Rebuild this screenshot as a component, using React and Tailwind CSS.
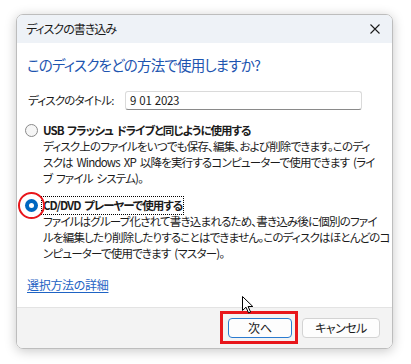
import React from "react";

const jp = "font-['Noto_Sans_CJK_JP',sans-serif] [font-feature-settings:'palt']";

function Radio({ checked }) {
  if (checked) {
    return (
      <span className="relative flex h-[13px] w-[13px] shrink-0 items-center justify-center rounded-full bg-[#0067c0]">
        <span className="h-[5px] w-[5px] rounded-full bg-white" />
        {/* red annotation circle */}
        <span className="absolute left-[-7px] top-[-7px] h-[27px] w-[27px] rounded-full border-2 border-[#e8161b]" />
      </span>
    );
  }
  return (
    <span className="h-[13px] w-[13px] shrink-0 rounded-full border border-[#8a8a8a] bg-[#f6f6f6]" />
  );
}

function Option({ checked, title, lines }) {
  return (
    <div>
      <div className="flex h-[16px] items-center gap-[5px]">
        <Radio checked={checked} />
        <span
          className={
            "text-[11.5px] font-bold leading-[15px] tracking-[-1px] [word-spacing:2px] whitespace-nowrap " +
            (checked ? "outline-1 outline-dotted outline-black outline-offset-[1px]" : "")
          }
        >
          {title}
        </span>
      </div>
      <div className="pl-[18px] text-[11.5px] leading-[16px] tracking-[-0.8px] [word-spacing:2px] whitespace-nowrap">
        {lines.map((l) => (
          <div key={l}>{l}</div>
        ))}
      </div>
    </div>
  );
}

export default function App() {
  return (
    <div className={"relative h-[364px] w-[411px] overflow-hidden bg-white pl-[16px] pt-[14px] text-[#1b1b1b] " + jp}>
      <div className="w-[377px] overflow-hidden rounded-[7px] border border-[#bdbdbd] shadow-[0_2px_12px_rgba(0,0,0,0.22)]">
        {/* title bar */}
        <div className="flex h-[28px] items-center justify-between bg-[#eef2f7] pl-[9px] pr-[11px]">
          <span className="text-[12px] tracking-[-1px]">ディスクの書き込み</span>
          <svg width="12" height="12" viewBox="0 0 12 12">
            <path d="M1.5 1.5 L10.5 10.5 M10.5 1.5 L1.5 10.5" stroke="#1b1b1b" strokeWidth="1.1" />
          </svg>
        </div>

        {/* body */}
        <div className="h-[264px] bg-white px-[10px] pt-[12px]">
          <div className="text-[14.5px] leading-[20px] tracking-[-0.8px] whitespace-nowrap text-[#1d55b0]">
            このディスクをどの方法で使用しますか?
          </div>

          <div className="mt-[16px] flex h-[19px] items-center">
            <span className="w-[98px] pl-[1px] text-[11.5px] tracking-[-0.8px] whitespace-nowrap">ディスクのタイトル:</span>
            <div className="flex h-[19px] w-[237px] items-center rounded-[3px] border border-[#dadada] border-b-[#8a8a8a] bg-white pl-[4px] text-[11.5px] tracking-[-0.3px] [word-spacing:1px]">
              9 01 2023
            </div>
          </div>

          <div className="mt-[12px] -ml-[2px]">
            <Option
              title="USB フラッシュ ドライブと同じように使用する"
              lines={[
                "ディスク上のファイルをいつでも保存、編集、および削除できます。このディ",
                "スクは Windows XP 以降を実行するコンピューターで使用できます (ライ",
                "ブ ファイル システム)。",
              ]}
            />
          </div>

          <div className="mt-[11px] -ml-[2px]">
            <Option
              checked
              title="CD/DVD プレーヤーで使用する"
              lines={[
                "ファイルはグループ化されて書き込まれるため、書き込み後に個別のファイ",
                "ルを編集したり削除したりすることはできません。このディスクはほとんどのコ",
                "ンピューターで使用できます (マスター)。",
              ]}
            />
          </div>

          <div className="mt-[16px] text-[12px] leading-[16px] tracking-[-0.3px]">
            <a href="#" className="text-[#1e63c4] underline underline-offset-2">
              選択方法の詳細
            </a>
          </div>
        </div>

        {/* footer */}
        <div className="flex h-[41px] items-center justify-end gap-[10px] border-t border-[#e3e3e3] bg-[#f3f3f3] pr-[12px]">
          <div className="relative">
            <button className="flex h-[20px] w-[64px] items-center justify-center rounded-[4px] border border-[#2a7bd0] bg-[#fdfdfd] text-[12px]">
              次へ
            </button>
            {/* red annotation box */}
            <span className="absolute left-[-8px] right-[-6px] top-[-7px] bottom-[-6px] border-[3px] border-[#e8161b]" />
          </div>
          <button className="flex h-[20px] w-[78px] items-center justify-center rounded-[4px] border border-[#d3d3d3] bg-[#fdfdfd] text-[12px] tracking-[-0.5px]">
            キャンセル
          </button>
        </div>
      </div>

      {/* mouse cursor */}
      <svg className="absolute left-[242px] top-[296px]" width="12" height="18" viewBox="0 0 12 18">
        <path
          d="M0.5 0.5 L0.5 14.5 L4 11.2 L6.6 17 L8.6 16.1 L6.1 10.5 L10.8 10.5 Z"
          fill="white"
          stroke="black"
          strokeWidth="1"
          strokeLinejoin="round"
        />
      </svg>
    </div>
  );
}
